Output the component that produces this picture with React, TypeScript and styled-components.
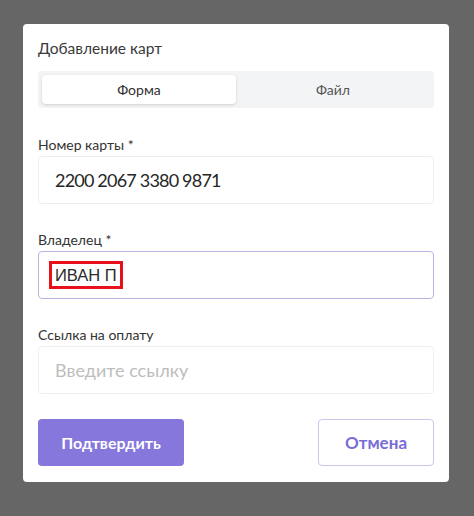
import React, { useState } from "react";
import styled, { createGlobalStyle, css } from "styled-components";

const GlobalStyle = createGlobalStyle`
  body {
    margin: 0;
    background: #666666;
    font-family: "Lato", "Noto Sans", sans-serif;
  }
`;

const Page = styled.div`
  width: 474px;
  height: 516px;
  padding: 24px 25px 0 23px;
  box-sizing: border-box;
`;

const Modal = styled.div`
  width: 426px;
  background: #fff;
  border-radius: 4px;
  padding: 14px 15px 16px;
  box-sizing: border-box;
`;

const Title = styled.h2`
  margin: 0;
  font-size: 15.5px;
  line-height: 20px;
  font-weight: 400;
  color: #3a3a3a;
`;

const Tabs = styled.div`
  margin-top: 13px;
  height: 37px;
  display: grid;
  grid-template-columns: 1fr 1fr;
  padding: 4px;
  box-sizing: border-box;
  background: #f3f4f6;
  border-radius: 4px;
`;

const Tab = styled.button<{ active?: boolean }>`
  border: none;
  background: transparent;
  border-radius: 4px;
  font-family: inherit;
  font-size: 14px;
  color: #555;
  cursor: pointer;
  ${({ active }) =>
    active &&
    css`
      background: #fff;
      color: #2f2f2f;
      box-shadow: 0 1px 3px rgba(0, 0, 0, 0.15);
    `}
`;

const Field = styled.div<{ first?: boolean }>`
  margin-top: ${({ first }) => (first ? "29px" : "28px")};
  display: flex;
  flex-direction: column;
  gap: 3px;
`;

const Label = styled.label`
  font-size: 14px;
  line-height: 16px;
  color: #333;
`;

const InputBox = styled.div<{ focused?: boolean }>`
  height: 48px;
  display: flex;
  align-items: center;
  padding: 0 16px;
  box-sizing: border-box;
  border: 1px solid ${({ focused }) => (focused ? "#b9b4e4" : "#eeeeee")};
  border-radius: 4px;
  font-size: 18px;
  color: #262626;
`;

const CardNumber = styled.span`
  letter-spacing: -0.8px;
`;

const Placeholder = styled.span`
  color: #bdbdbd;
`;

const Marked = styled.span`
  font-family: "Liberation Sans", Arial, sans-serif;
  font-size: 16.5px;
  color: #2a2a2a;
  margin-left: -6px;
  padding: 2px 3px 2px 3px;
  border: 3px solid #e8101a;
  line-height: 18px;
`;

const Actions = styled.div`
  margin-top: 25px;
  display: flex;
  justify-content: space-between;
`;

const Button = styled.button<{ variant: "primary" | "outline" }>`
  height: 47px;
  border-radius: 4px;
  font-family: inherit;
  font-weight: 700;
  font-size: 16px;
  cursor: pointer;
  ${({ variant }) =>
    variant === "primary"
      ? css`
          width: 146px;
          background: #8577db;
          color: #fff;
          border: none;
        `
      : css`
          width: 116px;
          background: #fff;
          color: #7a6cd6;
          border: 1px solid #cbc6ee;
          font-size: 17px;
        `}
`;

export default function App() {
  const [tab, setTab] = useState("form");

  return (
    <Page>
      <GlobalStyle />
      <Modal>
        <Title>Добавление карт</Title>
        <Tabs>
          <Tab active={tab === "form"} onClick={() => setTab("form")}>
            Форма
          </Tab>
          <Tab active={tab === "file"} onClick={() => setTab("file")}>
            Файл
          </Tab>
        </Tabs>

        <Field first>
          <Label>Номер карты *</Label>
          <InputBox>
            <CardNumber>2200 2067 3380 9871</CardNumber>
          </InputBox>
        </Field>

        <Field>
          <Label>Владелец *</Label>
          <InputBox focused>
            <Marked>ИВАН П</Marked>
          </InputBox>
        </Field>

        <Field>
          <Label>Ссылка на оплату</Label>
          <InputBox>
            <Placeholder>Введите ссылку</Placeholder>
          </InputBox>
        </Field>

        <Actions>
          <Button variant="primary">Подтвердить</Button>
          <Button variant="outline">Отмена</Button>
        </Actions>
      </Modal>
    </Page>
  );
}
